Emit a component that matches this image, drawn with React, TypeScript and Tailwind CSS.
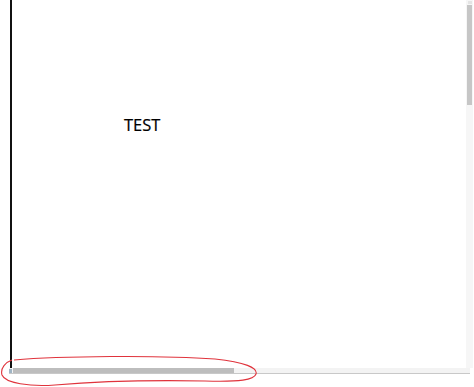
export default function App() {
  return (
    <div className="relative h-[387px] w-[474px] overflow-hidden bg-white font-['Open_Sans',sans-serif] text-black">
      {/* page area */}
      <div className="flex h-[368px]">
        <div className="w-[10px] shrink-0" />
        <div className="flex-1 border-l-2 border-[#111] pl-[112px] pt-[113px]">
          <span className="text-[16.5px] leading-[24px] [-webkit-text-stroke:0.2px_#000]">TEST</span>
        </div>
        {/* vertical scrollbar */}
        <div className="mr-[1px] flex w-[7px] shrink-0 flex-col items-center bg-[#f6f6f6]">
          <div className="mt-[1px] h-[3px] w-[4px] bg-[#e4e4e4]" />
          <div className="mt-[1px] h-[100px] w-[5px] bg-[#c6c6c6]" />
        </div>
      </div>

      {/* horizontal scrollbar */}
      <div className="ml-[9px] mr-[4px] flex h-[5px] items-center gap-[1px] bg-[#f3f3f3]">
        <div className="h-[4px] w-[3px] bg-[#9fb4c4]" />
        <div className="h-[5px] w-[221px] bg-[#bdbdbd]" />
      </div>
      <div className="ml-[9px] mr-[4px] h-[1px] bg-[#c8c8c8]" />

      {/* red annotation */}
      <svg className="absolute left-0 top-0" width="474" height="387" viewBox="0 0 474 387" fill="none">
        <path
          d="M14 360 C 60 356, 160 355, 215 359 C 245 362, 258 368, 256 374 C 254 380, 240 382, 205 381 C 150 380, 90 382, 55 385 C 30 387, 5 383, 2 375 C 0 368, 6 362, 12 360"
          stroke="#e0333c"
          strokeWidth="1.1"
        />
      </svg>
    </div>
  );
}
